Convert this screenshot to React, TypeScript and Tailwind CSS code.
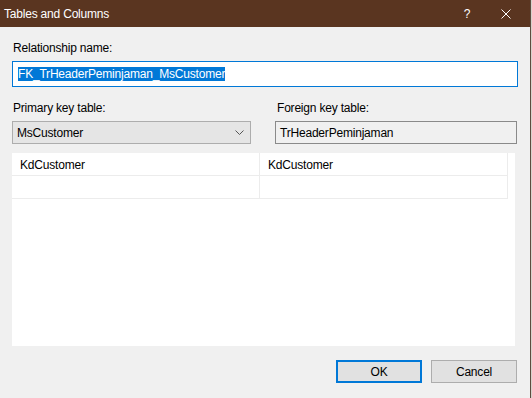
import React from "react";

const font = { fontFamily: '"Liberation Sans", Arial, sans-serif' };

export default function App() {
  return (
    <div className="w-[532px] h-[398px] flex bg-[#f0f0f0] overflow-hidden text-[12px] tracking-[-0.2px] text-black" style={font}>
      <div className="w-[530px] h-full flex flex-col">
        {/* Title bar */}
        <div className="h-[27px] bg-[#5a3520] flex items-center text-white shrink-0">
          <span className="pl-[4px] flex-1 leading-[16px]">Tables and Columns</span>
          <span className="w-[20px] text-center mr-[24px] leading-[16px]">?</span>
          <svg width="10" height="10" viewBox="0 0 10 10" className="mr-[19px]">
            <path d="M0.5 0.5 L9.5 9.5 M9.5 0.5 L0.5 9.5" stroke="white" strokeWidth="1" fill="none" />
          </svg>
        </div>
        {/* Body */}
        <div className="flex-1 flex flex-col pl-[12px] pr-[12px]">
          <div className="mt-[13px] pl-[1px] leading-[16px]">Relationship name:</div>
          <div className="mt-[5px] h-[26px] border border-[#0078d7] bg-white flex items-center pl-[5px]">
            <span className="bg-[#0078d7] text-white leading-[14px] h-[14px]">FK_TrHeaderPeminjaman_MsCustomer</span>
          </div>
          <div className="mt-[13px] flex">
            <div className="w-[239px] flex flex-col">
              <div className="pl-[1px] leading-[16px]">Primary key table:</div>
              <div className="mt-[5px] h-[23px] border border-[#adadad] bg-[#e5e5e5] flex items-center pl-[4px] pr-[6px]">
                <span className="flex-1 leading-[16px]">MsCustomer</span>
                <svg width="9" height="5" viewBox="0 0 9 5">
                  <path d="M0.5 0.5 L4.5 4.5 L8.5 0.5" stroke="#555" strokeWidth="1" fill="none" />
                </svg>
              </div>
            </div>
            <div className="ml-[24px] w-[242px] flex flex-col">
              <div className="pl-[2px] leading-[16px]">Foreign key table:</div>
              <div className="mt-[5px] h-[23px] border border-[#8a8a8a] bg-[#f0f0f0] flex items-center pl-[4px]">
                <span className="leading-[16px]">TrHeaderPeminjaman</span>
              </div>
            </div>
          </div>
          <div className="mt-[9px] w-[503px] h-[193px] bg-white">
            <div className="w-[496px] grid grid-cols-[248px_248px]">
              <div className="h-[23px] border-b border-r border-[#ececec] flex items-center pl-[8px] pt-[1px] leading-[16px]">KdCustomer</div>
              <div className="h-[23px] border-b border-r border-[#ececec] flex items-center pl-[8px] pt-[1px] leading-[16px]">KdCustomer</div>
              <div className="h-[23px] border-b border-r border-[#ececec]"></div>
              <div className="h-[23px] border-b border-r border-[#ececec]"></div>
            </div>
          </div>
          <div className="mt-[14px] flex justify-end gap-[9px] pr-[1px]">
            <button className="w-[86px] h-[23px] border-2 border-[#0078d7] bg-[#e1e1e1] flex items-center justify-center leading-[16px]">OK</button>
            <button className="w-[86px] h-[23px] border border-[#adadad] bg-[#e1e1e1] flex items-center justify-center leading-[16px]">Cancel</button>
          </div>
        </div>
      </div>
      <div className="w-[1px] h-full bg-[#5e4c40]"></div>
      <div className="w-[1px] h-full bg-[#d8d2cc]"></div>
    </div>
  );
}
